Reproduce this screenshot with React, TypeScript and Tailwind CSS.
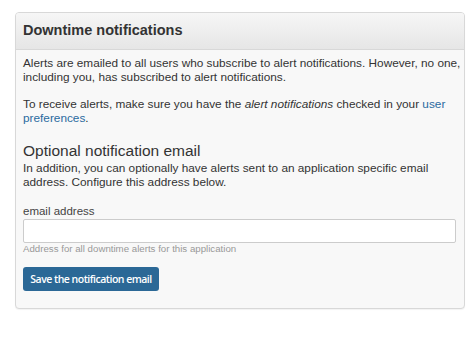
export default function App() {
  return (
    <div className="w-[474px] h-[351px] bg-white pt-[12px] pl-[15px]" style={{ fontFamily: '"Liberation Sans", Arial, sans-serif' }}>
      <div className="w-[450px] h-[297px] border border-[#d8d8d8] rounded-[4px] bg-[#f8f8f8] overflow-hidden shadow-[0_1px_1px_rgba(0,0,0,0.05)]">
        <div className="h-[37px] border-b border-[#d8d8d8] bg-gradient-to-b from-[#f6f6f6] to-[#e6e6e6] flex items-center px-[7px]">
          <h3 className="text-[14.5px] font-bold text-[#333]">Downtime notifications</h3>
        </div>
        <div className="pl-[7px] pr-[3px] pt-[6px] text-[11.8px] leading-[14px] text-[#333]">
          <p>Alerts are emailed to all users who subscribe to alert notifications. However, no one, including you, has subscribed to alert notifications.</p>
          <p className="mt-[13px]">
            To receive alerts, make sure you have the <em>alert notifications</em> checked in your <a className="text-[#2a6aa0]">user preferences</a>.
          </p>
          <h4 className="mt-[17px] text-[15.5px] leading-[18px] text-[#333]">Optional notification email</h4>
          <p className="mt-[1px] pr-[20px]">In addition, you can optionally have alerts sent to an application specific email address. Configure this address below.</p>
          <label className="block mt-[15px] text-[11.5px] leading-[14px] text-[#444]">email address</label>
          <div className="mt-[1px] w-[433px] h-[24px] bg-white border border-[#ccc] rounded-[2px]"></div>
          <p className="mt-[0px] text-[9.7px] leading-[12px] text-[#999]">Address for all downtime alerts for this application</p>
          <button className="mt-[12px] h-[24px] w-[136px] bg-[#2b6896] rounded-[3px] text-white text-[10.5px] tracking-[-0.5px] font-semibold whitespace-nowrap flex items-center justify-center" style={{ fontFamily: '"Open Sans", sans-serif' }}>
            Save the notification email
          </button>
        </div>
      </div>
    </div>
  );
}
